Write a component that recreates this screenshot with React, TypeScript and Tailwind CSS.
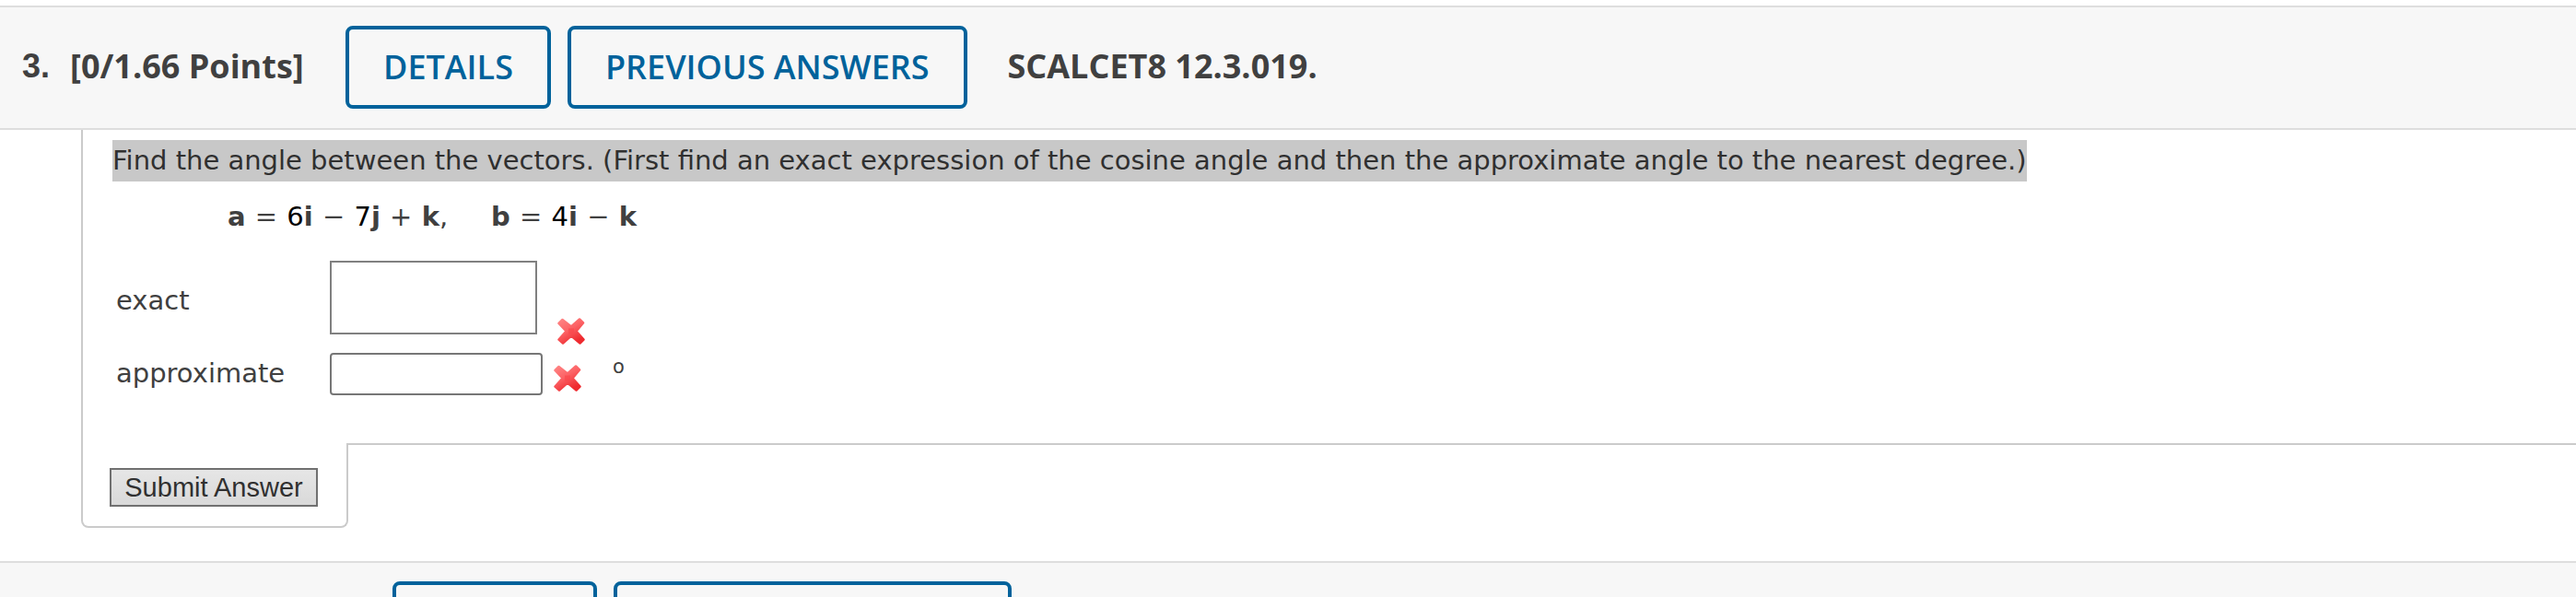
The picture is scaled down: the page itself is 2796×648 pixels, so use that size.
import type { ReactNode } from "react";

const outline =
  "h-[90px] shrink-0 rounded-lg border-4 border-[#00629b] px-[37px] text-[36px] leading-[48px] font-semibold whitespace-nowrap text-[#00629b]";

function WrongMark({ id }: { id: string }) {
  return (
    <svg viewBox="0 0 30 31" className="h-[31px] w-[30px] shrink-0" role="img" aria-label="Incorrect">
      <defs>
        <linearGradient id={id} x1="0" y1="0" x2="0.6" y2="1">
          <stop offset="0" stopColor="#ff8585" />
          <stop offset="0.5" stopColor="#fc6265" />
          <stop offset="1" stopColor="#ee2a2f" />
        </linearGradient>
      </defs>
      <path
        d="M5.500 3 15 10.500 24 2.500 28 6.500 20.500 15.500 28.500 24.500 24.500 28.500 15 20.500 6 28.500 1.500 24.500 9.500 15.500 1.500 7Z"
        fill={`url(#${id})`}
        stroke={`url(#${id})`}
        strokeWidth="2.500"
        strokeLinejoin="round"
      />
      <path d="M12 12.500h6v6h-6z" fill="#f9494d" opacity="0.7" />
    </svg>
  );
}

function Num({ children }: { children: ReactNode }) {
  return <span className="text-black">{children}</span>;
}

function Op({ children }: { children: ReactNode }) {
  return <span className="mx-px">{children}</span>;
}

const bar =
  "flex h-[135px] items-start border-y-2 border-[#dedede] bg-[#f7f7f7] pt-5 font-['Open_Sans',sans-serif] text-[36px] leading-[48px] font-bold text-[#404040]";

export default function App() {
  return (
    <main className="h-screen overflow-hidden bg-white pt-1.5">
      <header className={bar}>
        <h2 className="flex w-[375px] shrink-0 pt-5 pl-6">
          <span className="w-[52px] font-['Liberation_Sans',sans-serif]">3.</span>
          <span>[0/1.66 Points]</span>
        </h2>
        <div className="flex gap-[18px]">
          <button type="button" className={outline}>
            DETAILS
          </button>
          <button type="button" className={outline}>
            PREVIOUS ANSWERS
          </button>
        </div>
        <span className="ml-11 pt-5">SCALCET8 12.3.019.</span>
      </header>

      <form className="pl-[88px]" onSubmit={(e) => e.preventDefault()}>
        <div className="border-l-2 border-[#cbcbcb] pt-[11px] pb-[50px] pl-8 font-['DejaVu_Sans',sans-serif] text-[29px] leading-[45px] text-[#404040]">
          <p>
            <span className="inline-block bg-[#c8c8c8] whitespace-nowrap text-[#303030]">
              Find the angle between the vectors. (First find an exact expression of the cosine angle and then the
              approximate angle to the nearest degree.)
            </span>
          </p>
          <div className="mt-4 flex gap-[10px] pl-[125px] whitespace-pre">
            <p>
              <b>a</b> <Op>=</Op> <Num>6</Num>
              <b>i</b> <Op>−</Op> <Num>7</Num>
              <b>j</b> <Op>+</Op> <b>k</b>,{"   "}
            </p>
            <p>
              {" "}
              <b>b</b> <Op>=</Op> <Num>4</Num>
              <b>i</b> <Op>−</Op> <b>k</b>
            </p>
          </div>
          <div className="mt-[25px] flex items-start pl-1">
            <label htmlFor="exact" className="w-[232px] pt-[21px]">
              exact
            </label>
            <input id="exact" type="text" className="h-20 w-[225px] border-2 border-[#808080]" />
            <span className="pt-[61px] pl-[22px]">
              <WrongMark id="wrong-exact" />
            </span>
          </div>
          <div className="mt-2 flex h-12 items-start pl-1">
            <label htmlFor="approx" className="w-[232px]">
              approximate
            </label>
            <input id="approx" type="text" className="h-[46px] w-[231px] rounded border-2 border-[#767676]" />
            <span className="pt-3 pl-3">
              <WrongMark id="wrong-approx" />
            </span>
            <span className="pl-[34px] text-[21px] leading-[30px]">o</span>
          </div>
        </div>
        <div className="flex">
          <div className="w-[290px] rounded-b-lg border-x-2 border-b-2 border-[#cbcbcb] pt-[27px] pb-[21px] pl-[29px]">
            <button
              type="submit"
              className="block h-[42px] w-[226px] border-2 border-[#707070] bg-linear-to-b from-[#e6e6e6] to-[#d9d9d9] font-['Liberation_Sans',sans-serif] text-[29px] leading-[36px] whitespace-nowrap text-[#303030]"
            >
              Submit Answer
            </button>
          </div>
          <div className="flex-1 border-t-2 border-[#cbcbcb]" />
        </div>
      </form>

      <div className="mt-9">
        <header className={bar}>
          <div className="flex gap-[18px] pl-[426px]">
            <button type="button" aria-label="Details" className={`${outline} w-[222px]`} />
            <button type="button" aria-label="Previous answers" className={`${outline} w-[432px]`} />
          </div>
        </header>
      </div>
    </main>
  );
}
